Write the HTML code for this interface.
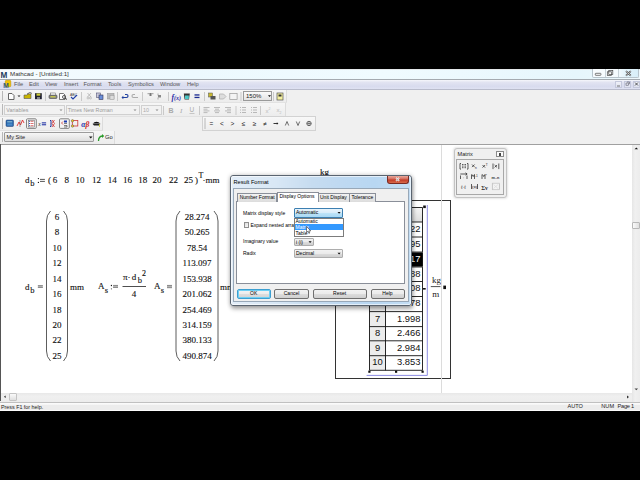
<!DOCTYPE html>
<html><head><meta charset="utf-8">
<style>
*{box-sizing:border-box;margin:0;padding:0}
html,body{width:640px;height:480px;overflow:hidden;background:#000}
body{position:relative;font-family:"Liberation Sans",sans-serif}
.a{position:absolute}
.ui{font-family:"Liberation Sans",sans-serif;font-size:6px;color:#222;white-space:nowrap;line-height:1}
.m{font-family:"Liberation Serif",serif;font-size:9.5px;color:#111;white-space:nowrap;line-height:1}
.sep{position:absolute;width:1px;background:#c8c8c8;border-right:1px solid #fff}
</style></head><body>

<!-- title bar -->
<div class="a" style="left:0;top:69px;width:640px;height:10px;background:linear-gradient(90deg,#f8fbfd 0%,#f2fbfe 10%,#ecf9fe 30%,#f0fbff 60%,#e6f6fc 90%,#eef8fc 100%)"></div>
<div class="a" style="left:0;top:69px;width:640px;height:1px;background:#e4e8ea"></div>
<svg class="a" style="left:0;top:0" width="640" height="480"><text x="0.6" y="77.6" font-family="Liberation Sans" font-weight="bold" font-size="8.2" fill="#1d3a5c" letter-spacing="-0.3">M</text></svg>
<div class="a ui" style="left:10px;top:71px;font-size:6.2px;color:#333">Mathcad - [Untitled:1]</div>
<div class="a" style="left:591.5px;top:69px;width:47.5px;height:8.6px;border:1px solid #b8c4cc;border-top:none;border-radius:0 0 2px 2px;background:linear-gradient(90deg,#f8fcfe 0%,#f4fafd 55%,#e0f2fa 75%,#d8eef8 100%)"></div>
<div class="a" style="left:604.5px;top:69px;width:1px;height:8px;background:#c8d2d8"></div>
<div class="a" style="left:617.5px;top:69px;width:1px;height:8px;background:#c8d2d8"></div>
<svg class="a" style="left:0;top:0" width="640" height="480">
 <rect x="595.3" y="73.3" width="5.6" height="2" rx="0.5" fill="#fff" stroke="#444" stroke-width="0.7"/>
 <rect x="607.3" y="71.8" width="4" height="3.8" fill="#fff" stroke="#444" stroke-width="0.7"/>
 <rect x="608.8" y="70.6" width="4" height="3.8" fill="none" stroke="#444" stroke-width="0.7"/>
 <path d="M626 71.2l4.8 4.4M630.8 71.2l-4.8 4.4" stroke="#444" stroke-width="1.6"/>
 <path d="M626 71.2l4.8 4.4M630.8 71.2l-4.8 4.4" stroke="#fff" stroke-width="0.6"/>
</svg>
<div class="a" style="left:0;top:79px;width:640px;height:1px;background:#a4aab0"></div>

<!-- menu bar -->
<div class="a" style="left:0;top:80px;width:640px;height:9px;background:linear-gradient(#f6f7fb 0%,#e2e4f2 25%,#d8dbee 70%,#dfe2f2 100%)"></div>
<div class="a" style="left:0;top:89px;width:640px;height:1px;background:#b9bccc"></div>
<svg class="a" style="left:0;top:0" width="640" height="480"><rect x="5.3" y="80.3" width="5.5" height="6.5" rx="1" fill="#f2c200" stroke="#b88a00" stroke-width="0.5"/><text x="3.3" y="88.3" font-family="Liberation Sans" font-weight="bold" font-size="6.5" fill="#2d5a82">M</text></svg>
<div class="a ui" style="left:14px;top:82px;color:#555;font-size:5.7px;top:82.2px">File</div>
<div class="a ui" style="left:29px;top:82px;color:#555;font-size:5.7px;top:82.2px">Edit</div>
<div class="a ui" style="left:45px;top:82px;color:#555;font-size:5.7px;top:82.2px">View</div>
<div class="a ui" style="left:64px;top:82px;color:#555;font-size:5.7px;top:82.2px">Insert</div>
<div class="a ui" style="left:83.5px;top:82px;color:#555;font-size:5.7px;top:82.2px">Format</div>
<div class="a ui" style="left:108px;top:82px;color:#555;font-size:5.7px;top:82.2px">Tools</div>
<div class="a ui" style="left:128px;top:82px;color:#555;font-size:5.7px;top:82.2px">Symbolics</div>
<div class="a ui" style="left:160px;top:82px;color:#555;font-size:5.7px;top:82.2px">Window</div>
<div class="a ui" style="left:187px;top:82px;color:#555;font-size:5.7px;top:82.2px">Help</div>
<div class="a" style="left:614.8px;top:80.6px;width:7px;height:7.5px;background:linear-gradient(#eef0f8,#dfe2f0);border:1px solid #c4c8dc"></div>
<div class="a" style="left:623.8px;top:80.6px;width:7px;height:7.5px;background:linear-gradient(#eef0f8,#dfe2f0);border:1px solid #c4c8dc"></div>
<div class="a" style="left:632.7px;top:80.6px;width:7.3px;height:7.5px;background:linear-gradient(#eef0f8,#dfe2f0);border:1px solid #c4c8dc"></div>
<svg class="a" style="left:0;top:0" width="640" height="480">
 <path d="M617 86h3" stroke="#555" stroke-width="0.8"/>
 <rect x="626" y="83" width="2.4" height="2.2" fill="none" stroke="#556" stroke-width="0.6"/><path d="M627 82h2.5v2.2" fill="none" stroke="#556" stroke-width="0.6"/>
 <path d="M635 82.5l3 3M638 82.5l-3 3" stroke="#333" stroke-width="0.8"/>
</svg>

<!-- toolbar area -->
<div class="a" style="left:0;top:90px;width:640px;height:54px;background:#f0f0f0"></div>
<div class="a" style="left:0;top:144px;width:640px;height:1px;background:#a0a0a0"></div>


<!-- toolbars -->
<div class="a" style="left:0;top:90px;width:287px;height:13px;background:linear-gradient(#f6f6f6,#ececec);border-right:1px solid #dcdcdc;border-bottom:1px solid #fff"></div>
<div class="a" style="left:0;top:103px;width:286px;height:14px;background:linear-gradient(#f6f6f6,#ececec);border-right:1px solid #dcdcdc"></div>
<div class="a" style="left:0;top:117px;width:103px;height:14px;background:linear-gradient(#f6f6f6,#ececec);border-right:1px solid #dcdcdc"></div>
<div class="a" style="left:202px;top:116px;width:114px;height:15px;background:linear-gradient(#f8f8f8,#eeeeee);border:1px solid #d2d2d2"></div>
<div class="a" style="left:0;top:131px;width:115px;height:13px;background:linear-gradient(#f6f6f6,#ececec);border-right:1px solid #dcdcdc"></div>
<div class="a" style="left:0;top:102px;width:287px;height:1px;background:#e2e2e2"></div>
<div class="a" style="left:0;top:116px;width:202px;height:1px;background:#e2e2e2"></div>
<div class="a" style="left:0;top:130px;width:103px;height:1px;background:#e2e2e2"></div>
<!-- comboboxes -->
<div class="a" style="left:4px;top:105px;width:61px;height:10px;background:#f2f2f2;border:1px solid #d0d0d0"></div>
<div class="a ui" style="left:6.3px;top:107.5px;color:#999;font-size:5.4px">Variables</div>
<div class="a" style="left:66px;top:105px;width:74px;height:10px;background:#f2f2f2;border:1px solid #d0d0d0"></div>
<div class="a ui" style="left:67.8px;top:107.5px;color:#999;font-size:5.3px">Times New Roman</div>
<div class="a" style="left:141px;top:105px;width:21px;height:10px;background:#f2f2f2;border:1px solid #d0d0d0"></div>
<div class="a ui" style="left:143px;top:107.5px;color:#aaa;font-size:5.4px">10</div>
<div class="a" style="left:243px;top:91px;width:29px;height:10px;background:linear-gradient(#fafafa,#e4e4e4);border:1px solid #9a9a9a"></div>
<div class="a ui" style="left:246px;top:93px;color:#222">150%</div>
<div class="a" style="left:4px;top:132px;width:90px;height:10px;background:linear-gradient(#f6f6f6,#dedede);border:1px solid #9c9c9c;border-radius:1px"></div>
<div class="a ui" style="left:6.5px;top:134.5px;color:#222;font-size:5.6px">My Site</div>
<div class="a ui" style="left:105px;top:135.2px;color:#222;font-size:5.8px">Go</div>
<svg class="a" style="left:0;top:0" width="640" height="480" viewBox="0 0 640 480">
 <g fill="none" stroke="#b8b8b8" stroke-width="1">
  <path d="M2.5 91v10M2.5 104v11M2.5 118v11M2.5 132v10M205 118v11"/>
 </g>
 <g stroke="#c9c9c9" stroke-width="1">
  <path d="M45.5 92v9M81.5 92v9M117.5 92v9M142.5 92v9M168.5 92v9M204.5 92v9M241 92v9M273.5 92v9M163.5 106v9M199.5 106v9M236 106v9M260.5 106v9"/>
 </g>
 <!-- row1 icons -->
 <path d="M8.5 93.5h3.5l2 2v4h-5.5z" fill="#fff" stroke="#555" stroke-width="0.9"/>
 <path d="M17.5 95.5h3l-1.5 1.5z" fill="#222"/>
 <path d="M24 95h3l1-1h3v4.5h-7z" fill="#c8b400" stroke="#555" stroke-width="0.6"/>
 <path d="M27 94l3-1.5 2 1" fill="none" stroke="#333" stroke-width="0.7"/>
 <rect x="35" y="93.2" width="6.8" height="6" fill="#223" />
 <rect x="36.5" y="93.5" width="3.8" height="2.2" fill="#cc3"/>
 <rect x="37" y="97" width="3" height="2" fill="#888"/>
 <rect x="49" y="95" width="8" height="3.5" rx="1" fill="#888" stroke="#444" stroke-width="0.6"/>
 <rect x="50.5" y="93" width="5" height="2" fill="#fff" stroke="#555" stroke-width="0.5"/>
 <rect x="50.5" y="96.3" width="5" height="1" fill="#dd3"/>
 <path d="M59.5 93.5h4l1.5 1.5v4.5h-5.5z" fill="#fff" stroke="#555" stroke-width="0.8"/>
 <circle cx="64" cy="97" r="1.5" fill="none" stroke="#333" stroke-width="0.8"/><path d="M65 98l2 1.5" stroke="#333" stroke-width="0.9"/>
 <text x="70" y="96" font-size="3.5" font-family="Liberation Sans" fill="#444">ABC</text>
 <path d="M71 97l2 2 4-4" fill="none" stroke="#1f3fa8" stroke-width="1.1"/>
 <path d="M87.5 93l3.5 4M91 93l-3.5 4" stroke="#aaa" stroke-width="0.7"/><circle cx="88" cy="98" r="1" fill="none" stroke="#aaa" stroke-width="0.6"/><circle cx="90.5" cy="98" r="1" fill="none" stroke="#aaa" stroke-width="0.6"/>
 <rect x="96.5" y="93" width="4" height="4.5" fill="#ccd" stroke="#557" stroke-width="0.6"/>
 <rect x="99" y="95" width="4" height="4.5" fill="#6a8ed8" stroke="#335" stroke-width="0.6"/>
 <rect x="107.5" y="93.5" width="6.5" height="5.5" fill="#bbb" stroke="#999" stroke-width="0.6"/>
 <rect x="110" y="95.5" width="4" height="4" fill="#ddd" stroke="#999" stroke-width="0.5"/>
 <path d="M122 97.5h4.5a1.5 1.5 0 0 0 0-3h-1.5" fill="none" stroke="#2040a0" stroke-width="1.2"/><path d="M121.5 97.5l1.8-1.8v3.6z" fill="#2040a0"/>
 <path d="M138 97.5h-4.5a1.5 1.5 0 0 1 0-3h1.5" fill="none" stroke="#aaa" stroke-width="1.1"/>
 <path d="M147.5 93.7h2M151.5 93.7h2" stroke="#888" stroke-width="0.8"/><rect x="149.5" y="93" width="2" height="3" fill="#777"/>
 <path d="M158 93.5v2M158 97.5v2" stroke="#999" stroke-width="0.8"/><rect x="158" y="95" width="3" height="2.5" fill="#888"/>
 <text x="171.5" y="99.5" font-size="7.5" font-style="italic" font-family="Liberation Serif" fill="#2a2aa8" font-weight="bold">f<tspan font-size="6">(x)</tspan></text>
 <path d="M183.8 93.5h6l-0.8 6h-4.4z" fill="#333"/><rect x="185" y="95.5" width="3.8" height="3.5" fill="#4cc8c8"/>
 <rect x="194.5" y="94.3" width="5" height="1.3" fill="#1a2a90"/><rect x="194.5" y="96.8" width="5" height="1.3" fill="#1a2a90"/>
 <rect x="208.5" y="93" width="4" height="4" fill="#c8b830" stroke="#555" stroke-width="0.5"/><rect x="210.5" y="96" width="5" height="3.5" fill="#555"/>
 <path d="M219.5 94h4l2.5 2.5-2.5 2.5h-4z" fill="#ddd" stroke="#aaa" stroke-width="0.7"/>
 <rect x="229.8" y="93.5" width="7.3" height="6" fill="#f4f4f4" stroke="#999" stroke-width="0.7"/>
 <path d="M268 95.3h3l-1.5 1.6z" fill="#111"/>
 <rect x="277" y="93" width="6" height="7" fill="#f4f0a0" stroke="#555" stroke-width="0.7"/><rect x="278.5" y="94.5" width="3" height="2" fill="#333"/>
 <!-- row2 -->
 <path d="M59.5 109.5h3l-1.5 1.5z" fill="#888"/><path d="M133.5 109.5h3l-1.5 1.5z" fill="#888"/><path d="M155.5 109.5h3l-1.5 1.5z" fill="#888"/>
 <text x="168.6" y="112.5" font-size="7" font-weight="bold" font-family="Liberation Sans" fill="#aaa">B</text>
 <text x="180" y="112.5" font-size="7" font-style="italic" font-family="Liberation Serif" fill="#aaa">I</text>
 <text x="189.5" y="112" font-size="6.5" font-family="Liberation Sans" fill="#aaa">U</text><path d="M189.5 113.5h5" stroke="#aaa" stroke-width="0.6"/>
 <g stroke="#b4b4b4" stroke-width="0.9"><path d="M203.5 107.5h6M203.5 109.2h4M203.5 110.9h6M203.5 112.6h4M214 107.5h6M215 109.2h4M214 110.9h6M215 112.6h4M225 107.5h6M227 109.2h4M225 110.9h6M227 112.6h4"/></g>
 <g stroke="#aaa" stroke-width="0.8"><path d="M240 107.5h1M242 107.5h4M240 110h1M242 110h4M240 112.5h1M242 112.5h4M251 107.5h1M253 107.5h4M251 110h1M253 110h4M251 112.5h1M253 112.5h4"/></g>
 <text x="265.5" y="113" font-size="6" font-family="Liberation Sans" fill="#bbb">x<tspan font-size="3.5" dy="-3">2</tspan></text>
 <text x="276.5" y="112" font-size="6" font-family="Liberation Sans" fill="#bbb">x<tspan font-size="3.5" dy="2">2</tspan></text>
 <!-- row3 -->
 <rect x="6" y="120" width="7.5" height="6.5" rx="1" fill="#2a6ab0" stroke="#1a3a70" stroke-width="0.5"/><rect x="7.2" y="121" width="5" height="1.5" fill="#7ac"/><rect x="7.2" y="123.5" width="5" height="2" fill="#4a8ac8"/>
 <path d="M17 126l2-4 1.5 3 2-5 1.5 3" fill="none" stroke="#e03030" stroke-width="0.9"/><path d="M20 120v7" stroke="#444" stroke-width="0.5"/>
 <rect x="26.5" y="118.8" width="9.8" height="9.6" rx="1" fill="#f4f4f4" stroke="#777" stroke-width="0.9"/>
 <rect x="28.5" y="120.2" width="6" height="6.8" fill="#fff" stroke="#555" stroke-width="0.5"/>
 <g stroke="#c33" stroke-width="0.7"><path d="M30.5 121.3h3M30.5 123.5h3M30.5 125.7h3"/></g><g fill="#3358c0"><rect x="29" y="120.8" width="1" height="1"/><rect x="29" y="123" width="1" height="1"/><rect x="29" y="125.2" width="1" height="1"/></g>
 <text x="38.3" y="126" font-size="5.5" font-family="Liberation Serif" font-style="italic" fill="#222">x</text><rect x="41.8" y="122.3" width="4.3" height="1.1" fill="#2a3aa8"/><rect x="41.8" y="124.2" width="4.3" height="1.1" fill="#2a3aa8"/>
 <path d="M50 120.5h1v6h-1" fill="none" stroke="#223aa0" stroke-width="1"/><path d="M52 120l2.5 3.5-2.5 3.5M54.5 120l-2.5 3.5 2.5 3.5" fill="none" stroke="#d03030" stroke-width="0.8"/>
 <rect x="59.5" y="118.8" width="9.8" height="9.6" rx="1" fill="#f4f4f4" stroke="#777" stroke-width="0.9"/>
 <path d="M63 121.5l-1.5 1.5 1.5 1.5" fill="none" stroke="#c33" stroke-width="0.8"/><rect x="64" y="120.5" width="3" height="2" fill="#1a3ab0"/><path d="M64 123.5h3M64 125.5h3v1.5h-3" fill="none" stroke="#333" stroke-width="0.6"/>
 <rect x="72.3" y="120.5" width="5.5" height="5.5" fill="none" stroke="#c33" stroke-width="0.8"/><circle cx="72.5" cy="120.8" r="1.2" fill="#f0d020" stroke="#335" stroke-width="0.4"/><circle cx="72.5" cy="126" r="1.2" fill="#f0d020" stroke="#335" stroke-width="0.4"/>
 <text x="81.3" y="126.8" font-size="7.5" font-family="Liberation Serif" font-style="italic" fill="#2030b0" font-weight="bold">α</text><text x="85.5" y="126.8" font-size="7.5" font-family="Liberation Serif" font-style="italic" fill="#d02020" font-weight="bold">β</text>
 <path d="M93 123.5a3.8 3 0 0 1 7 0z" fill="#111"/><path d="M92.5 123.8h8l-1.5 1.6h-5z" fill="#222"/><path d="M99.5 124v3" stroke="#cc3" stroke-width="0.8"/>
 <!-- boolean toolbar -->
 <g font-family="Liberation Sans" font-size="6.5" fill="#222" text-anchor="middle">
  <text x="211.3" y="126">=</text><text x="222" y="126">&lt;</text><text x="232.5" y="126">&gt;</text><text x="243.5" y="126">≤</text><text x="254.5" y="126">≥</text><text x="265" y="126">≠</text>
 </g>
 <path d="M273.5 123.5h4" stroke="#222" stroke-width="0.9"/><path d="M276.8 122.2l1.6 1.3-1.6 1.3z" fill="#222"/><path d="M285.3 125.5l1.7-4 1.7 4M296.3 121.5l1.7 4 1.7-4" fill="none" stroke="#333" stroke-width="0.7"/>
 <circle cx="309" cy="123.5" r="2.2" fill="none" stroke="#444" stroke-width="0.8"/><path d="M306.8 123.5h4.4M309 121.3v4.4" stroke="#444" stroke-width="0.6"/>
 <!-- row4 -->
 <path d="M89 136.5h3.5l-1.75 2z" fill="#111"/>
 <path d="M98.5 141c0-3 1.5-5 4.5-5" fill="none" stroke="#2a9a2a" stroke-width="1.3"/><path d="M102 134l2.2 2-2.2 2z" fill="#2a9a2a"/>
</svg>

<!-- document -->
<div class="a" style="left:0;top:145px;width:632px;height:248px;background:#fff"></div>
<div class="a" style="left:0;top:144px;width:1px;height:249px;background:#555"></div>
<!-- page right margin line -->
<div class="a" style="left:441px;top:145px;width:1px;height:248px;background:#e0e0e0"></div>

<!-- math -->
<svg class="a" style="left:0;top:0" width="640" height="480" viewBox="0 0 640 480">
<g font-family="Liberation Serif" fill="#111" stroke="#111" stroke-width="0.12">
<text x="25.1" y="182.60" font-size="9">d</text>
<text x="30.3" y="185.6" font-size="8.5">b</text>

<text x="48.1" y="183.10" font-size="9">(</text>
<text x="52.8" y="182.60" font-size="9">6</text>
<text x="64.5" y="182.60" font-size="9">8</text>
<text x="75.5" y="182.60" font-size="9">10</text>
<text x="92" y="182.60" font-size="9">12</text>
<text x="107.7" y="182.60" font-size="9">14</text>
<text x="123" y="182.60" font-size="9">16</text>
<text x="138.3" y="182.60" font-size="9">18</text>
<text x="152.5" y="182.60" font-size="9">20</text>
<text x="169" y="182.60" font-size="9">22</text>
<text x="184" y="182.60" font-size="9">25</text>
<text x="195" y="183.10" font-size="9">)</text>
<text x="198.5" y="178" font-size="8">T</text>
<text x="202.5" y="182.60" font-size="9">·mm</text>
<text x="57" y="220.00" font-size="9" text-anchor="middle">6</text>
<text x="57" y="235.42" font-size="9" text-anchor="middle">8</text>
<text x="57" y="250.84" font-size="9" text-anchor="middle">10</text>
<text x="57" y="266.26" font-size="9" text-anchor="middle">12</text>
<text x="57" y="281.68" font-size="9" text-anchor="middle">14</text>
<text x="57" y="297.10" font-size="9" text-anchor="middle">16</text>
<text x="57" y="312.52" font-size="9" text-anchor="middle">18</text>
<text x="57" y="327.94" font-size="9" text-anchor="middle">20</text>
<text x="57" y="343.36" font-size="9" text-anchor="middle">22</text>
<text x="57" y="358.78" font-size="9" text-anchor="middle">25</text>
<text x="25" y="289.80" font-size="9">d</text>
<text x="30.2" y="292.8" font-size="8.5">b</text>

<text x="70" y="289.80" font-size="9">mm</text>
<text x="98" y="289.20" font-size="9">A</text>
<text x="104.8" y="292.5" font-size="8.5">s</text>

<text x="123" y="280.00" font-size="9">π·</text>
<text x="131.8" y="280.00" font-size="9">d</text>
<text x="137.8" y="282.7" font-size="8.5">b</text>
<text x="142" y="275.6" font-size="8">2</text>
<text x="131.8" y="297.30" font-size="9">4</text>
<text x="154" y="289.20" font-size="9">A</text>
<text x="160.8" y="292.5" font-size="8.5">s</text>

<text x="197" y="220.00" font-size="9" text-anchor="middle">28.274</text>
<text x="197" y="235.42" font-size="9" text-anchor="middle">50.265</text>
<text x="197" y="250.84" font-size="9" text-anchor="middle">78.54</text>
<text x="197" y="266.26" font-size="9" text-anchor="middle">113.097</text>
<text x="197" y="281.68" font-size="9" text-anchor="middle">153.938</text>
<text x="197" y="297.10" font-size="9" text-anchor="middle">201.062</text>
<text x="197" y="312.52" font-size="9" text-anchor="middle">254.469</text>
<text x="197" y="327.94" font-size="9" text-anchor="middle">314.159</text>
<text x="197" y="343.36" font-size="9" text-anchor="middle">380.133</text>
<text x="197" y="358.78" font-size="9" text-anchor="middle">490.874</text>
<text x="220" y="289.80" font-size="9">mm</text>
<text x="320" y="175.00" font-size="9">kg</text>
</g>
 <g fill="none" stroke="#333" stroke-width="0.8">
  <path d="M50.5 211 Q46.5 215 46.5 221 V351 Q46.5 357 50.5 361"/>
  <path d="M63.5 211 Q67.5 215 67.5 221 V351 Q67.5 357 63.5 361"/>
  <path d="M180 211 Q176 215 176 221 V351 Q176 357 180 361"/>
  <path d="M214 211 Q218 215 218 221 V351 Q218 357 214 361"/>
 </g>
 <path d="M122.5 286.5H146" stroke="#222" stroke-width="0.8"/>
<g stroke="none">
 <circle cx="38.4" cy="178.6" r="0.65" fill="#111"/><circle cx="38.4" cy="182.4" r="0.65" fill="#111"/>
 <rect x="40" y="178.9" width="4.9" height="0.9" fill="#444"/><rect x="40" y="180.9" width="4.9" height="0.9" fill="#444"/>
 <rect x="37.9" y="285.1" width="4.9" height="2.9" fill="#b4b4b4"/><rect x="37.9" y="285.2" width="4.9" height="0.9" fill="#8a8a8a"/><rect x="37.9" y="287.1" width="4.9" height="0.9" fill="#8a8a8a"/>
 <circle cx="111.4" cy="285.5" r="0.65" fill="#111"/><circle cx="111.4" cy="288.8" r="0.6" fill="#555"/>
 <rect x="113.1" y="284.9" width="4.9" height="3.1" fill="#b4b4b4"/><rect x="113.1" y="285" width="4.9" height="0.9" fill="#8a8a8a"/><rect x="113.1" y="287.1" width="4.9" height="0.9" fill="#8a8a8a"/>
 <rect x="167" y="284.9" width="5" height="3.2" fill="#b4b4b4"/><rect x="167" y="285" width="5" height="0.9" fill="#8a8a8a"/><rect x="167" y="287.2" width="5" height="0.9" fill="#8a8a8a"/>
</g>

</svg>


<!-- results table -->
<div class="a" style="left:335px;top:200px;width:115.5px;height:179px;border:1px solid #333;background:#fff"></div>
<div class="a" style="left:369.5px;top:207.5px;width:53px;height:14.5px;background:linear-gradient(#f4f4f4,#dcdcdc)"></div>
<div class="a" style="left:369.5px;top:222px;width:16px;height:148.3px;background:#ececec"></div>
<svg class="a" style="left:0;top:0" width="640" height="480">
<g stroke="#111" stroke-width="0.9" fill="none">
<path d="M369.5 222H422.5"/><path d="M369.5 237H422.5"/><path d="M369.5 252H422.5"/><path d="M369.5 267H422.5"/><path d="M369.5 281.5H422.5"/><path d="M369.5 296.5H422.5"/><path d="M369.5 311.6H422.5"/><path d="M369.5 326.6H422.5"/><path d="M369.5 340.8H422.5"/><path d="M369.5 355.7H422.5"/><path d="M369.5 370.3H422.5"/>
<path d="M369.5 222V370.3M385.5 222V370.3M422.5 207.5V370.3M369.5 207.5H422.5"/>
</g>
<rect x="385.5" y="252" width="37" height="15" fill="#000"/>
<path d="M385.5 252.3H422.5M385.5 266.7H422.5" stroke="#fff" stroke-width="0.6" stroke-dasharray="1 1"/>
<g font-family="Liberation Sans" font-size="9.4" fill="#111">
<text x="377.5" y="231.9" text-anchor="middle">1</text><text x="420.5" y="231.9" text-anchor="end" fill="#111">0.222</text>
<text x="377.5" y="246.9" text-anchor="middle">2</text><text x="420.5" y="246.9" text-anchor="end" fill="#111">0.395</text>
<text x="377.5" y="261.9" text-anchor="middle">3</text><text x="420.5" y="261.9" text-anchor="end" fill="#fff">0.617</text>
<text x="377.5" y="276.6" text-anchor="middle">4</text><text x="420.5" y="276.6" text-anchor="end" fill="#111">0.888</text>
<text x="377.5" y="291.4" text-anchor="middle">5</text><text x="420.5" y="291.4" text-anchor="end" fill="#111">1.208</text>
<text x="377.5" y="306.4" text-anchor="middle">6</text><text x="420.5" y="306.4" text-anchor="end" fill="#111">1.578</text>
<text x="377.5" y="321.5" text-anchor="middle">7</text><text x="420.5" y="321.5" text-anchor="end" fill="#111">1.998</text>
<text x="377.5" y="336.1" text-anchor="middle">8</text><text x="420.5" y="336.1" text-anchor="end" fill="#111">2.466</text>
<text x="377.5" y="350.6" text-anchor="middle">9</text><text x="420.5" y="350.6" text-anchor="end" fill="#111">2.984</text>
<text x="377.5" y="365.4" text-anchor="middle">10</text><text x="420.5" y="365.4" text-anchor="end" fill="#111">3.853</text>
</g>
<path d="M427.3 205V375.4H366.6" stroke="#8080e0" stroke-width="0.9" fill="none"/>
<g fill="#111"><rect x="423.2" y="205.5" width="2.6" height="2.6"/><rect x="423" y="288" width="2.7" height="1.6"/><rect x="368.3" y="370.6" width="2.2" height="2.2"/><rect x="395" y="370.6" width="2.2" height="2.2"/><rect x="421.5" y="370.6" width="2.2" height="2.2"/><rect x="443.3" y="285.6" width="2.7" height="3.5"/></g>
<g font-family="Liberation Serif" font-size="9" fill="#222"><text x="432" y="283">kg</text><text x="432.3" y="297.3">m</text></g><path d="M430.8 286.6H440.5" stroke="#222" stroke-width="0.8"/>
</svg>


<div class="a" style="left:441px;top:145px;width:1px;height:248px;background:#dcdcdc"></div>
<!-- Matrix palette -->
<div class="a" style="left:453.5px;top:147.5px;width:53.5px;height:50.2px;border:1px solid #c4c4c4;border-radius:3px;background:#f0f0f0;box-shadow:0 0 2px 1px rgba(0,0,0,0.10)"></div>
<div class="a ui" style="left:457.6px;top:152px;font-size:5.6px;color:#222">Matrix</div>
<div class="a" style="left:495.5px;top:151px;width:8.2px;height:6.3px;border:1px solid #8a8a8a;background:#fcfcfc"></div>
<div class="a" style="left:498.5px;top:152.6px;width:2.4px;height:3.2px;border:0.7px solid #444"></div>
<div class="a" style="left:455.8px;top:159.2px;width:48.5px;height:35.6px;border:1px solid #a8a8a8;background:#f0f0f0"></div>
<svg class="a" style="left:0;top:0" width="640" height="480">
<g fill="none" stroke="#2a2a2a" stroke-width="0.75">
 <path d="M461 163.5h-1v5.6h1M467 163.5h1v5.6h-1"/>
 <path d="M462.5 164v4.5M464 164v4.5M465.5 164v4.5" stroke-dasharray="1 0.6"/>
 <path d="M472 164.5l2.6 2.6M474.6 164.5l-2.6 2.6"/>
 <path d="M482.5 165l2.6 2.6M485.1 165l-2.6 2.6"/>
 <path d="M493 163.5v5.6M498.8 163.5v5.6M494.6 165l2.4 2.4M497 165l-2.4 2.4"/>
 <path d="M460.3 174h6.8M465.5 172.8l1.6 1.2-1.6 1.2"/>
 <path d="M460.5 175.5v3.5M467 175.5v3.5"/>
 <path d="M471.5 174.5v4.5M472 174.5l1.2 2 1.2-2M474.5 174.5v4.5"/>
 <path d="M482 174.5v4.5M482.5 174.5l1.2 2 1.2-2M485 174.5v4.5"/>
 <path d="M493 184v5M498.8 184v5"/>
 <path d="M471.5 184v5M477.5 184v5"/>
</g>
<g font-family="Liberation Sans" fill="#2a2a2a">
 <text x="475" y="169.4" font-size="3.2">n</text>
 <text x="485.8" y="166.2" font-size="3.2">T</text>
 <text x="463" y="178.8" font-size="3.5">:</text>
 <text x="475" y="176.5" font-size="3.2">-1</text>
 <text x="485.5" y="176.5" font-size="3.5">*</text>
 <text x="491.5" y="178.8" font-size="3.8" font-weight="bold">m..n</text>
 <text x="461" y="189" font-size="5">ℓ·ℓ</text>
 <text x="472" y="189" font-size="4.5">ℓ×ℓ</text>
 <text x="481.2" y="189.5" font-size="5.8" font-family="Liberation Serif" font-weight="bold">Σv</text>
</g>
<rect x="492.3" y="183.2" width="7" height="6.5" fill="#f4f4f4" stroke="#c0c0c0" stroke-width="0.7"/>
<path d="M493.5 184.5l4.5 4M498 184.5l-4.5 4" stroke="#d0d0d0" stroke-width="0.5"/>
</svg>

<!-- dialog -->
<div class="a" style="left:229.5px;top:175px;width:182.5px;height:131px;border:1px solid #5a6470;border-radius:3px;box-shadow:0 0 4px rgba(0,0,0,0.22),1px 3px 4px rgba(0,0,0,0.3);background:linear-gradient(90deg,#e2edf8 0%,#d8e7f5 25%,#c6dcf0 45%,#bfd9f1 60%,#b8d7f2 80%,#c4def4 100%)"></div>
<div class="a" style="left:230.5px;top:176px;width:180.5px;height:129px;border:1px solid rgba(255,255,255,0.6);border-radius:2px"></div>
<div class="a ui" style="left:233.5px;top:179.8px;font-size:5.6px;color:#000">Result Format</div>
<div class="a" style="left:387px;top:175.5px;width:21.5px;height:8.5px;border:1px solid #7a2a22;border-top:none;border-radius:0 0 3px 3px;background:linear-gradient(#e8a89c 0%,#d46a5a 45%,#c03a26 55%,#d86a4a 100%)"></div>
<svg class="a" style="left:0;top:0" width="640" height="480"><path d="M396 177.8l3.2 3.2M399.2 177.8l-3.2 3.2" stroke="#fff" stroke-width="1.3"/><path d="M396 177.8l3.2 3.2M399.2 177.8l-3.2 3.2" stroke="#555" stroke-width="0.3"/></svg>
<div class="a" style="left:233px;top:188.3px;width:176px;height:114px;background:#f0f0f0;border:1px solid #98a8b8"></div>
<!-- tab panel -->
<div class="a" style="left:236.3px;top:201.3px;width:169px;height:83px;background:#fff;border:1px solid #8a8f99"></div>
<div class="a" style="left:237.3px;top:193.3px;width:39.3px;height:8.5px;background:linear-gradient(#f2f2f2,#dcdcdc);border:1px solid #8a8f99;border-bottom:none"></div>
<div class="a ui" style="left:239.7px;top:195.3px;font-size:5px;color:#000">Number Format</div>
<div class="a" style="left:276.5px;top:192px;width:42px;height:10px;background:#fff;border:1px solid #8a8f99;border-bottom:none"></div>
<div class="a ui" style="left:279.5px;top:194.2px;font-size:5px;color:#000">Display Options</div>
<div class="a" style="left:318.5px;top:193.3px;width:31px;height:8.5px;background:linear-gradient(#f2f2f2,#dcdcdc);border:1px solid #8a8f99;border-bottom:none;border-left:none"></div>
<div class="a ui" style="left:320px;top:195.3px;font-size:5px;color:#000">Unit Display</div>
<div class="a" style="left:349.5px;top:193.3px;width:26.5px;height:8.5px;background:linear-gradient(#f2f2f2,#dcdcdc);border:1px solid #8a8f99;border-bottom:none;border-left:none"></div>
<div class="a ui" style="left:351.5px;top:195.3px;font-size:5px;color:#000">Tolerance</div>
<!-- labels -->
<div class="a ui" style="left:243px;top:210.5px;font-size:5px;color:#000">Matrix display style</div>
<div class="a" style="left:243.5px;top:222px;width:5.2px;height:6px;border:1px solid #8f8f8f;background:linear-gradient(135deg,#dcdcdc,#fafafa)"></div>
<div class="a ui" style="left:250.4px;top:223px;font-size:5px;color:#000">Expand nested arrays</div>
<div class="a ui" style="left:243px;top:238.7px;font-size:5px;color:#000">Imaginary value</div>
<div class="a ui" style="left:243px;top:250.5px;font-size:5px;color:#000">Radix</div>
<!-- comboboxes -->
<div class="a" style="left:294px;top:208px;width:49px;height:9.5px;border:1px solid #3c7fb1;border-radius:1px;background:linear-gradient(#e8f4fc 0%,#d8ecf9 50%,#bee4f8 51%,#a8d8f4 100%)"></div>
<div class="a ui" style="left:296px;top:210.3px;font-size:5px;color:#000">Automatic</div>
<svg class="a" style="left:0;top:0" width="640" height="480"><path d="M337.5 212h3.2l-1.6 1.8z" fill="#111"/></svg>
<div class="a" style="left:294px;top:217.5px;width:49.5px;height:19.5px;background:#fff;border:1px solid #7c7c7c"></div>
<div class="a" style="left:295px;top:224.4px;width:47.5px;height:5.8px;background:#3399ff"></div>
<div class="a ui" style="left:295.5px;top:219.2px;font-size:5px;color:#000">Automatic</div>
<div class="a ui" style="left:295.5px;top:225px;font-size:5px;color:#fff">Matrix</div>
<div class="a ui" style="left:295.5px;top:231.2px;font-size:5px;color:#000">Table</div>
<svg class="a" style="left:0;top:0" width="640" height="480"><path d="M306.5 226.5v6l1.4-1.3 1 2.2 0.9-0.4-1-2.1h2z" fill="#fff" stroke="#111" stroke-width="0.5"/></svg>
<div class="a" style="left:294px;top:237.5px;width:20px;height:8.8px;border:1px solid #adadad;border-radius:1px;background:linear-gradient(#f2f2f2 0%,#ebebeb 50%,#dddddd 51%,#cfcfcf 100%)"></div>
<div class="a ui" style="left:296px;top:239.5px;font-size:5px;color:#000">i  (i)</div>
<div class="a" style="left:294px;top:248.7px;width:49px;height:9.4px;border:1px solid #adadad;border-radius:1px;background:linear-gradient(#f2f2f2 0%,#ebebeb 50%,#dddddd 51%,#cfcfcf 100%)"></div>
<div class="a ui" style="left:296px;top:251px;font-size:5px;color:#000">Decimal</div>
<svg class="a" style="left:0;top:0" width="640" height="480"><path d="M308.5 241.3h3.2l-1.6 1.8z M337.5 252.8h3.2l-1.6 1.8z" fill="#111"/></svg>
<!-- buttons -->
<div class="a" style="left:236.7px;top:288.7px;width:34px;height:10px;border:1px solid #3c9fd1;border-radius:2px;background:linear-gradient(#f4f4f4 0%,#ececec 50%,#dedede 51%,#d2d2d2 100%);box-shadow:inset 0 0 0 1px #6fd0f4"></div>
<div class="a ui" style="left:236.7px;width:34px;text-align:center;top:291px;font-size:5px;color:#000">OK</div>
<div class="a" style="left:274.4px;top:288.7px;width:34.3px;height:10px;border:1px solid #707070;border-radius:2px;background:linear-gradient(#f2f2f2 0%,#ebebeb 50%,#dddddd 51%,#cfcfcf 100%)"></div>
<div class="a ui" style="left:274.4px;width:34.3px;text-align:center;top:291px;font-size:5px;color:#000">Cancel</div>
<div class="a" style="left:312.6px;top:288.7px;width:54px;height:10px;border:1px solid #707070;border-radius:2px;background:linear-gradient(#f2f2f2 0%,#ebebeb 50%,#dddddd 51%,#cfcfcf 100%)"></div>
<div class="a ui" style="left:312.6px;width:54px;text-align:center;top:291px;font-size:5px;color:#000">Reset</div>
<div class="a" style="left:370.5px;top:288.7px;width:34px;height:10px;border:1px solid #707070;border-radius:2px;background:linear-gradient(#f2f2f2 0%,#ebebeb 50%,#dddddd 51%,#cfcfcf 100%)"></div>
<div class="a ui" style="left:370.5px;width:34px;text-align:center;top:291px;font-size:5px;color:#000">Help</div>

<!-- vertical scrollbar -->
<div class="a" style="left:632px;top:145px;width:8px;height:257px;background:linear-gradient(90deg,#e6e6e6,#f0f0f0 40%,#ececec)"></div>
<div class="a" style="left:632px;top:222px;width:7.5px;height:7px;background:linear-gradient(90deg,#fafafa,#e0e0e0);border:1px solid #b8b8b8;border-radius:1px"></div>
<!-- horizontal scrollbar -->
<div class="a" style="left:0;top:393px;width:632px;height:8.5px;background:linear-gradient(#e8e8e8,#f0f0f0 40%,#ececec)"></div>
<div class="a" style="left:9.2px;top:393.4px;width:7.5px;height:7.5px;background:linear-gradient(#fafafa,#e0e0e0);border:1px solid #c4c4c4;border-radius:1px"></div>
<div class="a" style="left:0;top:144px;width:1px;height:257px;background:#555"></div>
<svg class="a" style="left:0;top:0" width="640" height="480">
 <path d="M4 396.8l1.6-1.3v2.6z" fill="#222"/>
 <path d="M629 397l-2 -1.6v3.2z" fill="#333"/>
 <path d="M634.5 149.3l1.8-1.8 1.8 1.8z" fill="#111"/>
 <path d="M634.5 388.5l1.8 1.8 1.8-1.8z" fill="#444"/>
</svg>

<!-- status bar -->
<div class="a" style="left:0;top:401.5px;width:640px;height:9.5px;background:linear-gradient(#fafafa 0,#fafafa 1px,#ececec 2.5px,#ececec 100%);border-top:1px solid #c0c0c0"></div>
<div class="a" style="left:0;top:410px;width:640px;height:1px;background:#fcfcfc"></div>
<div class="a ui" style="left:1px;top:404.8px;color:#222;font-size:5.35px">Press F1 for help.</div>
<div class="a ui" style="left:567.5px;top:404.3px;color:#222;font-size:5.6px">AUTO</div>
<div class="a ui" style="left:601.3px;top:404.3px;color:#222;font-size:5.6px">NUM</div>
<div class="a ui" style="left:617.5px;top:404.3px;color:#222;font-size:5.6px;letter-spacing:-0.2px">Page 1</div>

</body></html>
